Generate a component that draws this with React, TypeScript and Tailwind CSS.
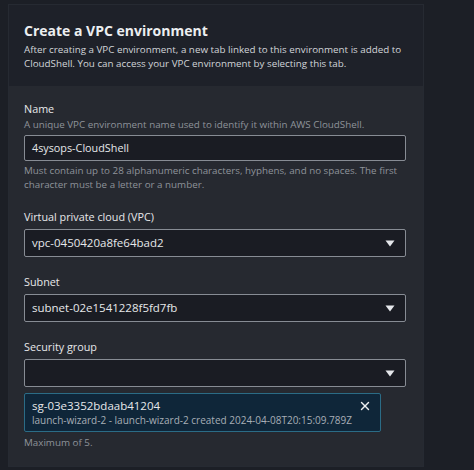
import React from "react";
import { X } from "lucide-react";

const font = { fontFamily: '"Open Sans", "Noto Sans", sans-serif' };

function Caret() {
  return (
    <svg width="10" height="7" viewBox="0 0 10 7" className="shrink-0">
      <path d="M0.5 0.5h9L5 6.5z" fill="#e5e7eb" />
    </svg>
  );
}

function Select({ value }: { value: string }) {
  return (
    <div className="flex items-center justify-between h-[28px] mt-[4px] pl-[7px] pr-[10px] bg-[#1a1c23] border border-[#878c94] rounded-[2px]">
      <span className="text-[11.5px] text-[#e6e8ea]">{value}</span>
      <Caret />
    </div>
  );
}

export default function App() {
  return (
    <div style={font} className="w-[474px] h-[470px] bg-[#1c1f26] overflow-hidden pt-[4px]">
      <div className="w-[416px] ml-[8px] bg-[#1e2129] border border-[#262a32]">
        <div className="px-[15px] pt-[16px] h-[81px]">
          <h1 className="text-[14px] leading-[20px] font-bold text-[#eceef0]">Create a VPC environment</h1>
          <p className="mt-[2px] text-[9.8px] leading-[14px] text-[#d2d5d9]">
            After creating a VPC environment, a new tab linked to this environment is added to CloudShell. You can
            access your VPC environment by selecting this tab.
          </p>
        </div>
        <div className="bg-[#262930] px-[15px] pt-[15px] h-[380px]">
          <div className="w-[382px]">
            <div className="text-[10.8px] leading-[16px] text-[#e6e8ea]">Name</div>
            <div className="mt-[1px] text-[9.8px] leading-[14px] text-[#8e939a]">
              A unique VPC environment name used to identify it within AWS CloudShell.
            </div>
            <div className="flex items-center h-[26px] mt-[3px] pl-[7px] bg-[#1a1c23] border border-[#878c94] rounded-[2px]">
              <span className="text-[10.8px] text-[#e6e8ea]">4sysops-CloudShell</span>
            </div>
            <div className="mt-[3px] text-[9.8px] leading-[14px] text-[#8e939a]">
              Must contain up to 28 alphanumeric characters, hyphens, and no spaces. The first character must be a
              letter or a number.
            </div>
          </div>
          <div className="mt-[17px] w-[382px]">
            <div className="text-[10.8px] leading-[16px] text-[#e6e8ea]">Virtual private cloud (VPC)</div>
            <Select value="vpc-0450420a8fe64bad2" />
          </div>
          <div className="mt-[17px] w-[382px]">
            <div className="text-[10.8px] leading-[16px] text-[#e6e8ea]">Subnet</div>
            <Select value="subnet-02e1541228f5fd7fb" />
          </div>
          <div className="mt-[17px] w-[382px]">
            <div className="text-[10.8px] leading-[16px] text-[#e6e8ea]">Security group</div>
            <Select value="" />
            <div className="mt-[6px] w-[357px] h-[39px] flex justify-between bg-[#0f2639] border border-[#2b6c86] rounded-[2px] pl-[7px] pr-[8px] pt-[3px]">
              <div>
                <div className="text-[11.5px] leading-[17px] text-[#e6e8ea]">sg-03e3352bdaab41204</div>
                <div className="text-[10px] leading-[13px] text-[#a7aeb6] whitespace-nowrap">
                  launch-wizard-2 - launch-wizard-2 created 2024-04-08T20:15:09.789Z
                </div>
              </div>
              <X size={14} strokeWidth={2.5} className="text-[#eceef0] mt-[2px]" />
            </div>
            <div className="mt-[4px] text-[9.8px] leading-[14px] text-[#8e939a]">Maximum of 5.</div>
          </div>
        </div>
      </div>
    </div>
  );
}
